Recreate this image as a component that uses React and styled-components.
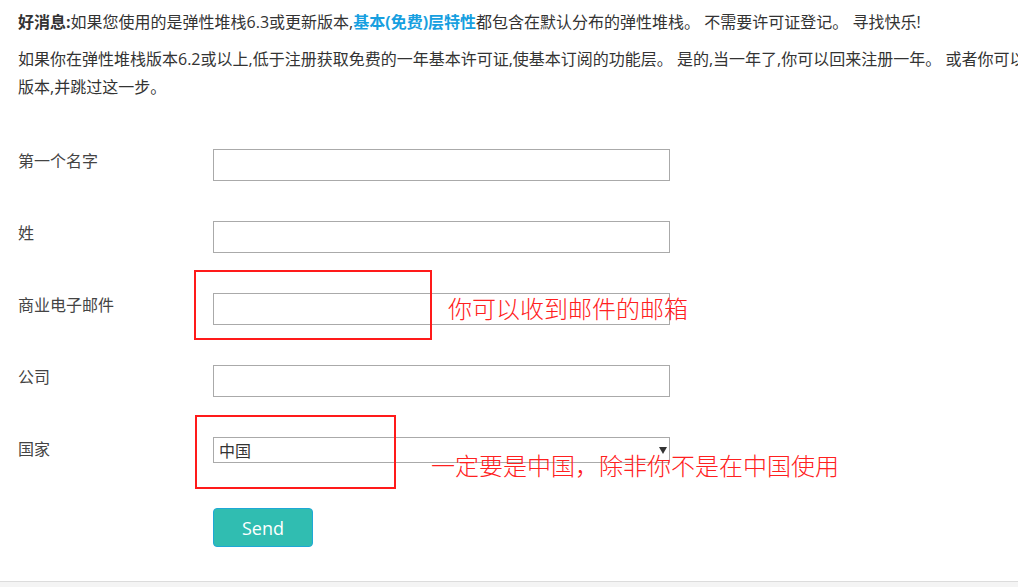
import React from "react";
import styled, { createGlobalStyle } from "styled-components";

const GlobalStyle = createGlobalStyle`
  html, body {
    margin: 0;
    padding: 0;
    background: #fff;
    overflow: hidden;
  }
  body {
    font-family: "Open Sans", "Noto Sans CJK SC", sans-serif;
    color: #333;
  }
`;

const Page = styled.div`
  position: relative;
  width: 1018px;
  height: 587px;
  overflow: hidden;
  display: flex;
  flex-direction: column;
`;

const Content = styled.div`
  flex: 1;
  padding: 8px 0 0 18px;
`;

const Para = styled.p`
  margin: 0 0 9px;
  font-size: 16px;
  line-height: 28px;
  white-space: nowrap;
`;

const Line = styled.span`
  display: block;
`;

const Strong = styled.b`
  font-weight: 700;
  color: ${(p) => (p.$link ? "#179fe0" : "#333")};
`;

const Form = styled.form`
  display: flex;
  flex-direction: column;
  margin-top: 48px;
`;

const Row = styled.div`
  display: grid;
  grid-template-columns: 195px 457px;
  align-items: start;
  height: 72px;
`;

const Label = styled.label`
  font-size: 16px;
  line-height: 24px;
  color: #444;
`;

const Input = styled.input`
  box-sizing: border-box;
  width: 457px;
  height: 32px;
  margin: 0;
  border: 1px solid #aaa;
  background: #fff;
  outline: none;
`;

const SelectWrap = styled.div`
  position: relative;
  width: 457px;
  &::after {
    content: "";
    position: absolute;
    right: 3px;
    top: 10px;
    border-left: 4px solid transparent;
    border-right: 4px solid transparent;
    border-top: 7px solid #333;
  }
`;

const Select = styled.select`
  box-sizing: border-box;
  appearance: none;
  width: 457px;
  height: 26px;
  margin: 0;
  padding: 0 0 0 5px;
  border: 1px solid #aaa;
  border-radius: 0;
  background: #fff;
  font-family: "Noto Sans CJK SC", sans-serif;
  font-size: 16px;
  color: #333;
  outline: none;
`;

const Send = styled.button`
  box-sizing: border-box;
  width: 100px;
  height: 39px;
  margin: -1px 0 0 0;
  border: 1px solid #1ea8d6;
  border-radius: 4px;
  background: #30bdb1;
  color: #fff;
  font-family: "Open Sans", sans-serif;
  font-size: 18px;
  cursor: pointer;
`;

const Footer = styled.div`
  height: 9px;
  border-top: 1px solid #dcdcdc;
  background: #f4f4f4;
`;

const Mark = styled.div`
  position: absolute;
  left: ${(p) => p.$x}px;
  top: ${(p) => p.$y}px;
  width: ${(p) => p.$w}px;
  height: ${(p) => p.$h}px;
  box-sizing: border-box;
  border: 2px solid #ff1a1a;
`;

const Note = styled.div`
  position: absolute;
  left: ${(p) => p.$x}px;
  top: ${(p) => p.$y}px;
  font-family: "Noto Sans CJK SC", sans-serif;
  font-weight: 300;
  font-size: 24px;
  line-height: 30px;
  color: #ff2020;
  white-space: nowrap;
`;

const fields = ["第一个名字", "姓", "商业电子邮件", "公司"];

export default function App() {
  return (
    <Page>
      <GlobalStyle />
      <Content>
        <Para>
          <Strong>好消息:</Strong>如果您使用的是弹性堆栈6.3或更新版本,
          <Strong $link>基本(免费)层特性</Strong>
          都包含在默认分布的弹性堆栈。 不需要许可证登记。 寻找快乐!
        </Para>
        <Para>
          <Line>
            如果你在弹性堆栈版本6.2或以上,低于注册获取免费的一年基本许可证,使基本订阅的功能层。
            是的,当一年了,你可以回来注册一年。 或者你可以升级到6.3或更新
          </Line>
          <Line>版本,并跳过这一步。</Line>
        </Para>

        <Form onSubmit={(e) => e.preventDefault()}>
          {fields.map((f) => (
            <Row key={f}>
              <Label>{f}</Label>
              <Input type="text" />
            </Row>
          ))}
          <Row>
            <Label>国家</Label>
            <SelectWrap>
              <Select defaultValue="cn">
                <option value="cn">中国</option>
              </Select>
            </SelectWrap>
          </Row>
          <Row>
            <span />
            <Send type="submit">Send</Send>
          </Row>
        </Form>
      </Content>
      <Footer />

      <Mark $x={194} $y={270} $w={238} $h={70} />
      <Note $x={448} $y={293}>你可以收到邮件的邮箱</Note>
      <Mark $x={195} $y={415} $w={201} $h={74} />
      <Note $x={431} $y={450}>一定要是中国，除非你不是在中国使用</Note>
    </Page>
  );
}
